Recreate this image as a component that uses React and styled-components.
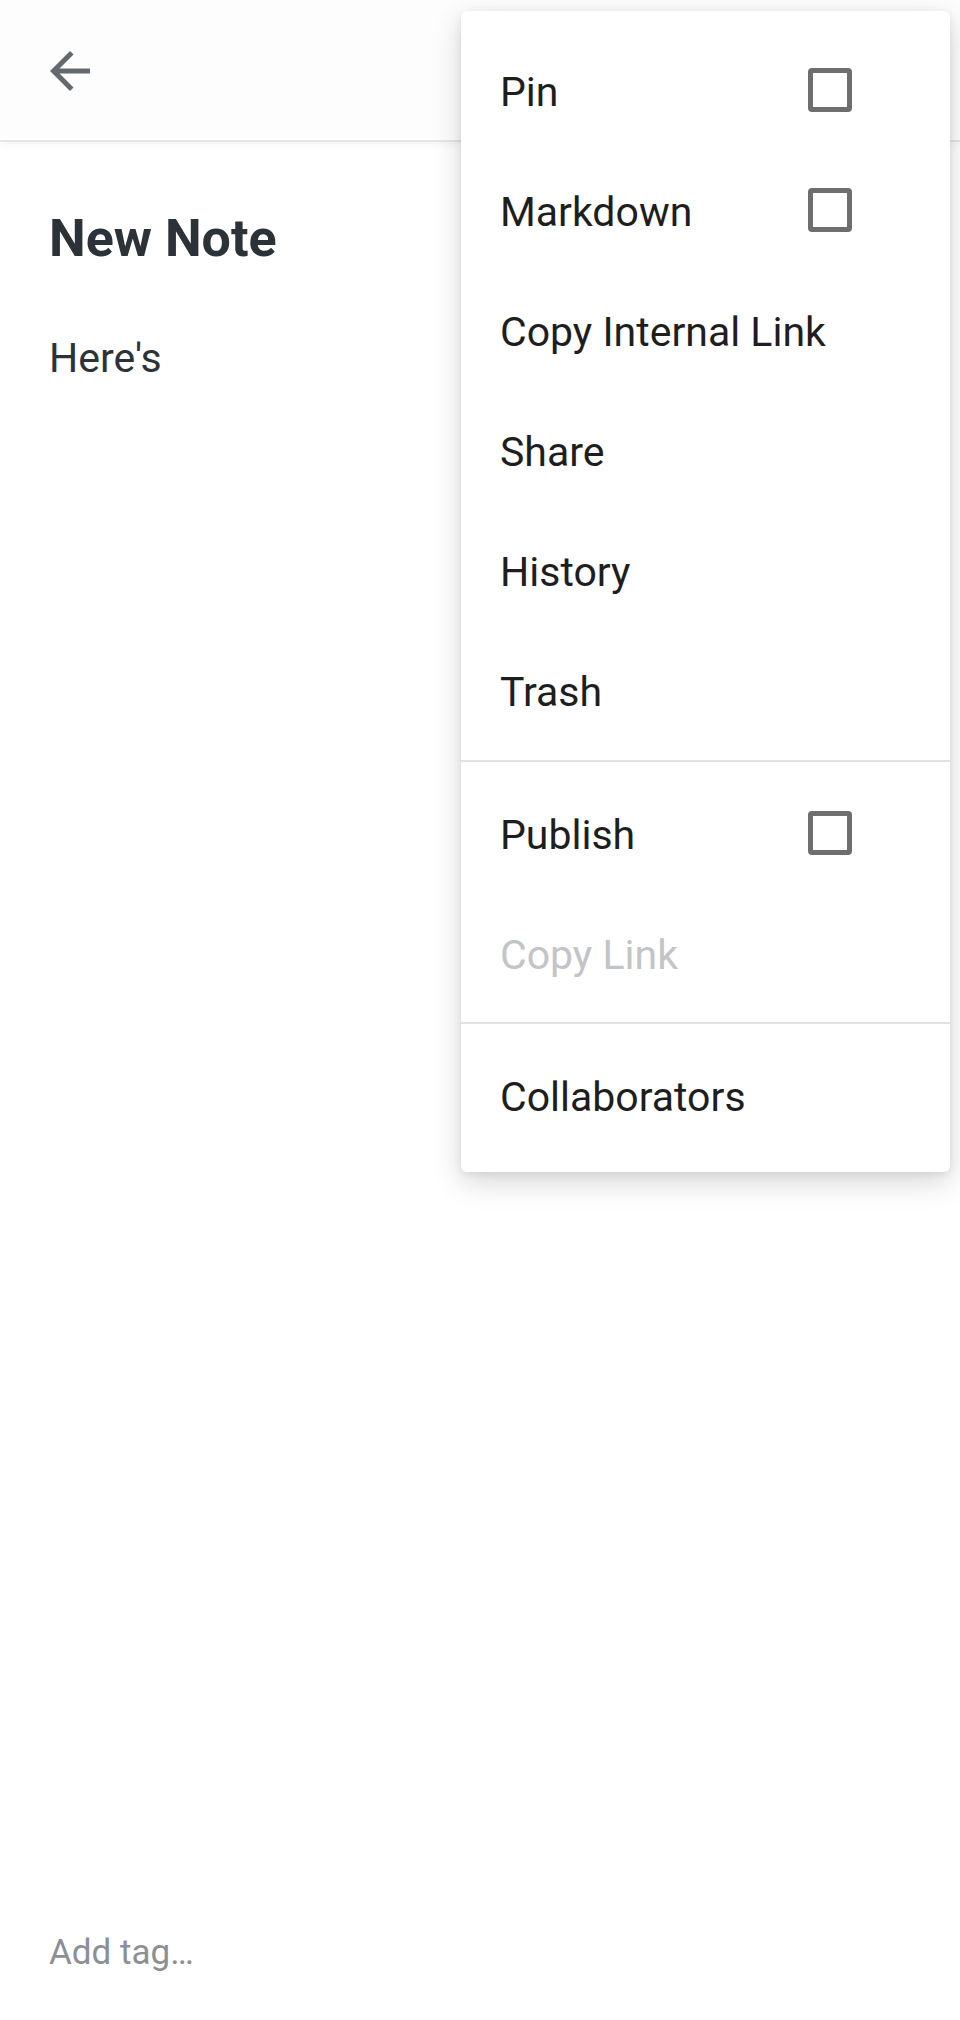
import React from "react";
import styled, { createGlobalStyle } from "styled-components";

const GlobalStyle = createGlobalStyle`
  html, body {
    margin: 0;
    padding: 0;
    background: #fff;
  }
  body {
    font-family: Roboto, "Liberation Sans", Arial, sans-serif;
  }
`;

const Page = styled.div`
  position: relative;
  width: 960px;
  height: 2020px;
  display: flex;
  flex-direction: column;
  background: #fff;
  overflow: hidden;
`;

const Toolbar = styled.header`
  height: 140px;
  flex-shrink: 0;
  display: flex;
  align-items: center;
  padding-left: 40px;
  background: #fdfdfd;
  border-bottom: 2px solid #e6e6e6;
  box-shadow: 0 2px 8px rgba(0, 0, 0, 0.05);
`;

const BackButton = styled.button`
  width: 60px;
  height: 60px;
  padding: 0;
  margin-top: 2px;
  border: none;
  background: transparent;
  display: flex;
  align-items: center;
  justify-content: center;
  color: #646970;
  cursor: pointer;
`;

const Editor = styled.main`
  flex: 1;
  padding: 67px 48px 0 49px;
`;

const Title = styled.h1`
  margin: 0;
  font-size: 52px;
  line-height: 60px;
  font-weight: 700;
  color: #2c3338;
`;

const Body = styled.p`
  margin: 65px 0 0;
  font-size: 41px;
  line-height: 49px;
  color: #2c3338;
`;

const TagBar = styled.div`
  padding: 0 48px 46px 49px;
  font-size: 35px;
  line-height: 42px;
  color: #8c8f94;
`;

const Menu = styled.div`
  position: absolute;
  top: 11px;
  right: 10px;
  width: 489px;
  background: #fff;
  border-radius: 6px;
  box-shadow: 0 10px 30px rgba(0, 0, 0, 0.16), 0 2px 8px rgba(0, 0, 0, 0.08);
`;

const Group = styled.div`
  padding: ${(p) => p.$pad};
  & + & {
    border-top: 2px solid #e2e2e2;
  }
`;

const Item = styled.div`
  height: 120px;
  display: flex;
  align-items: center;
  justify-content: space-between;
  padding: 0 98px 0 39px;
  font-size: 41px;
  color: ${(p) => (p.$disabled ? "#c3c4c7" : "#1e1e1e")};
`;

const Label = styled.span`
  margin-top: 2px;
`;

const Checkbox = styled.span`
  width: 44px;
  height: 44px;
  box-sizing: border-box;
  border: 5px solid #6e6e6e;
  border-radius: 4px;
  margin-top: -2px;
`;

function ArrowBack() {
  return (
    <svg width="60" height="60" viewBox="0 0 24 24" fill="currentColor">
      <path d="M20 11H7.83l5.59-5.59L12 4l-8 8 8 8 1.41-1.41L7.83 13H20v-2z" />
    </svg>
  );
}

const groups = [
  {
    pad: "20px 0 9px",
    items: [
      { label: "Pin", check: true },
      { label: "Markdown", check: true },
      { label: "Copy Internal Link" },
      { label: "Share" },
      { label: "History" },
      { label: "Trash" },
    ],
  },
  {
    pad: "12px 0 8px",
    items: [
      { label: "Publish", check: true },
      { label: "Copy Link", disabled: true },
    ],
  },
  {
    pad: "12px 0 16px",
    items: [{ label: "Collaborators" }],
  },
];

export default function App() {
  return (
    <>
      <GlobalStyle />
      <Page>
        <Toolbar>
          <BackButton aria-label="Back">
            <ArrowBack />
          </BackButton>
        </Toolbar>
        <Editor>
          <Title>New Note</Title>
          <Body>Here's</Body>
        </Editor>
        <TagBar>Add tag…</TagBar>

        <Menu>
          {groups.map((group, gi) => (
            <Group key={gi} $pad={group.pad}>
              {group.items.map((item) => (
                <Item key={item.label} $disabled={item.disabled}>
                  <Label>{item.label}</Label>
                  {item.check && <Checkbox />}
                </Item>
              ))}
            </Group>
          ))}
        </Menu>
      </Page>
    </>
  );
}
